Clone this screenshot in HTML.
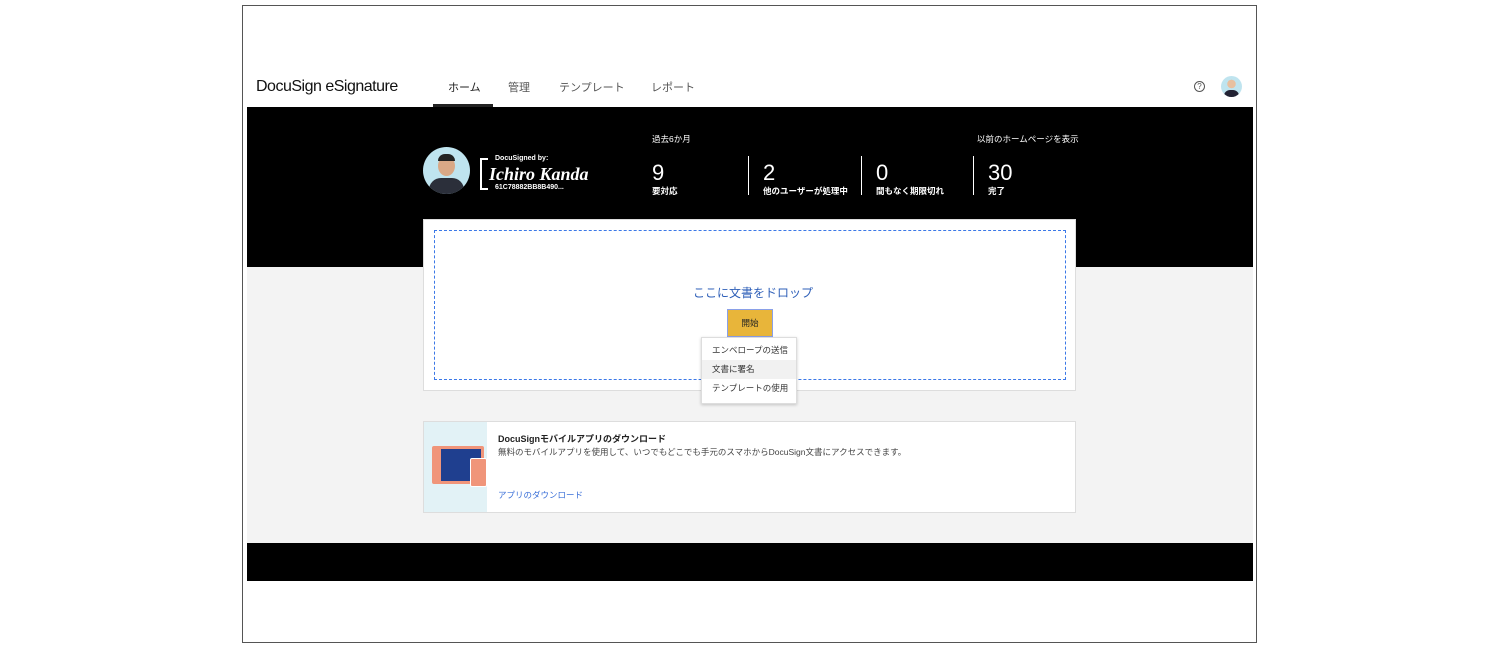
<!DOCTYPE html>
<html><head><meta charset="utf-8"><style>
*{margin:0;padding:0;box-sizing:border-box}
body{width:1500px;height:650px;background:#fff;font-family:"Liberation Sans","Noto Sans CJK JP",sans-serif;position:relative;overflow:hidden}
.a{position:absolute}
.frame{left:242px;top:5px;width:1015px;height:638px;border:1px solid #555}
.t{white-space:nowrap}
.num{font-size:22px;color:#fff;top:160px}
.lab{font-size:8.5px;color:#fff;top:185px;font-weight:bold}
.div{width:1px;background:#fff;top:156px;height:39px}
.mi{left:0;width:94px;height:19px;font-size:8.5px;color:#333;padding-left:10px;line-height:19px}
</style></head><body>
<div class="a frame"></div>
<div class="a t" style="left:256px;top:78px;font-size:16px;color:#111;letter-spacing:-0.5px">DocuSign eSignature</div>
<div class="a t" style="left:448px;top:79px;font-size:11px;color:#222">ホーム</div>
<div class="a" style="left:433px;top:104px;width:60px;height:3px;background:#222"></div>
<div class="a t" style="left:508px;top:79px;font-size:11px;color:#555">管理</div>
<div class="a t" style="left:559px;top:79px;font-size:11px;color:#555">テンプレート</div>
<div class="a t" style="left:651px;top:79px;font-size:11px;color:#555">レポート</div>
<div class="a" style="left:1194px;top:81px;width:11px;height:11px;border:1px solid #555;border-radius:50%;font-size:8px;text-align:center;line-height:9px;color:#555">?</div>
<div class="a" style="left:1221px;top:76px;width:21px;height:21px;border-radius:50%;background:radial-gradient(circle at 50% 38%,#e8c0a0 0 25%,#bfe4ef 26%);overflow:hidden"><div class="a" style="left:3px;top:14px;width:15px;height:10px;border-radius:6px 6px 0 0;background:#223"></div></div>

<div class="a" style="left:247px;top:107px;width:1006px;height:160px;background:#000"></div>
<div class="a" style="left:247px;top:267px;width:1006px;height:276px;background:#f3f3f3"></div>
<div class="a" style="left:247px;top:543px;width:1006px;height:38px;background:#000"></div>

<div class="a" style="left:423px;top:147px;width:47px;height:47px;border-radius:50%;background:#bfe4ef;overflow:hidden">
<div class="a" style="left:15px;top:9px;width:17px;height:20px;border-radius:50%;background:#d9a886"></div>
<div class="a" style="left:15px;top:7px;width:17px;height:7px;border-radius:8px 8px 0 0;background:#222"></div>
<div class="a" style="left:6px;top:31px;width:35px;height:20px;border-radius:12px 12px 0 0;background:#2b2f3a"></div>
</div>
<div class="a" style="left:480px;top:158px;width:8px;height:32px;border:2px solid #fff;border-right:none"></div>
<div class="a t" style="left:495px;top:155px;font-size:7px;color:#fff;font-weight:bold">DocuSigned by:</div>
<div class="a t" style="left:489px;top:164px;font-size:18px;color:#fff;font-style:italic;font-family:'Liberation Serif',serif;font-weight:bold">Ichiro Kanda</div>
<div class="a t" style="left:495px;top:184px;font-size:7px;color:#fff;font-weight:bold">61C78882BB8B490...</div>

<div class="a t" style="left:652px;top:133px;font-size:8.5px;color:#fff">過去6か月</div>
<div class="a t" style="left:977px;top:133px;font-size:8.5px;color:#fff">以前のホームページを表示</div>
<div class="a t num" style="left:652px">9</div><div class="a t lab" style="left:652px">要対応</div>
<div class="a div" style="left:748px"></div>
<div class="a t num" style="left:763px">2</div><div class="a t lab" style="left:763px">他のユーザーが処理中</div>
<div class="a div" style="left:861px"></div>
<div class="a t num" style="left:876px">0</div><div class="a t lab" style="left:876px">間もなく期限切れ</div>
<div class="a div" style="left:973px"></div>
<div class="a t num" style="left:988px">30</div><div class="a t lab" style="left:988px">完了</div>

<div class="a" style="left:423px;top:219px;width:653px;height:172px;background:#fff;border:1px solid #ddd"></div>
<div class="a" style="left:434px;top:230px;width:632px;height:150px;border:1.5px dashed #3b78e7"></div>
<div class="a t" style="left:693px;top:284px;font-size:12px;color:#2e5fb8">ここに文書をドロップ</div>
<div class="a" style="left:727px;top:309px;width:46px;height:28px;background:#e8b53a;border:1px solid #8aa0e8;font-size:8.5px;text-align:center;line-height:26px;color:#222">開始</div>
<div class="a" style="left:701px;top:337px;width:96px;height:67px;background:#fff;border:1px solid #ddd;box-shadow:0 1px 3px rgba(0,0,0,.2)">
<div class="a mi t" style="top:3px">エンベロープの送信</div>
<div class="a mi t" style="top:22px;background:#f1f1f1">文書に署名</div>
<div class="a mi t" style="top:41px">テンプレートの使用</div>
</div>

<div class="a" style="left:423px;top:421px;width:653px;height:92px;background:#fff;border:1px solid #ddd"></div>
<div class="a" style="left:424px;top:422px;width:63px;height:90px;background:#e2f2f6"></div>
<div class="a" style="left:432px;top:446px;width:52px;height:38px;background:#f0957a;border-radius:2px"></div>
<div class="a" style="left:441px;top:449px;width:40px;height:32px;background:#1f3f8f"></div>
<div class="a" style="left:470px;top:458px;width:17px;height:29px;background:#f0957a;border:1.5px solid #fff;border-radius:2px"></div>
<div class="a t" style="left:498px;top:432px;font-size:9px;color:#222;font-weight:bold">DocuSignモバイルアプリのダウンロード</div>
<div class="a t" style="left:498px;top:446px;font-size:8.5px;color:#444">無料のモバイルアプリを使用して、いつでもどこでも手元のスマホからDocuSign文書にアクセスできます。</div>
<div class="a t" style="left:498px;top:489px;font-size:8.5px;color:#3a6fd8">アプリのダウンロード</div>
</body></html>
